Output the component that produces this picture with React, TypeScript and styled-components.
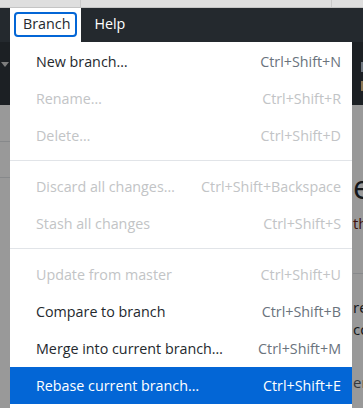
import React from 'react';
import styled, { createGlobalStyle } from 'styled-components';

const GlobalStyle = createGlobalStyle`
  html, body {
    margin: 0;
    padding: 0;
    overflow: hidden;
    background: #ffffff;
  }
  body {
    font-family: "Open Sans", "Noto Sans", "DejaVu Sans", sans-serif;
  }
`;

const Page = styled.div`
  position: relative;
  width: 363px;
  height: 408px;
  overflow: hidden;
  display: flex;
  flex-direction: column;
`;

const TabStrip = styled.div`
  height: 7px;
  flex: none;
  background: #dedede;
  border-bottom: 1px solid #c4c4c4;
  display: flex;
`;

const TabCell = styled.div<{ $width: number }>`
  width: ${p => p.$width}px;
  flex: none;
  border-right: 1px solid #c9c9c9;
`;

const MenuBar = styled.div`
  height: 34px;
  flex: none;
  background: #24292e;
  display: flex;
  padding-left: 10px;
`;

const Trigger = styled.div<{ $open?: boolean }>`
  display: flex;
  align-items: center;
  padding: 4px 4px 5px;
  background: ${p => (p.$open ? '#ffffff' : 'transparent')};
  color: ${p => (p.$open ? '#24292e' : '#ffffff')};
  font-size: 14.3px;
  align-self: stretch;
`;

const TriggerLabel = styled.span<{ $focused?: boolean }>`
  display: flex;
  align-items: center;
  height: 21px;
  padding: 0 5px 0 7px;
  border: 2px solid ${p => (p.$focused ? '#0366d6' : 'transparent')};
  border-radius: 4px;
  line-height: 1;
`;

const Workspace = styled.div`
  flex: 1;
  display: flex;
  flex-direction: column;
  background: #ffffff;
`;

const Toolbar = styled.div`
  height: 63px;
  flex: none;
  background: #2f363d;
  display: flex;
  justify-content: space-between;
  padding: 20px 0 0 1px;
  box-sizing: border-box;
`;

const Caret = styled.span`
  width: 0;
  height: 0;
  border-left: 4px solid transparent;
  border-right: 4px solid transparent;
  border-top: 5px solid #d0d0d0;
`;

const ChipColumn = styled.div`
  display: flex;
  flex-direction: column;
  gap: 9px;
  padding-top: 0;
  width: 2px;
`;

const Chip = styled.span<{ $tone: string }>`
  display: block;
  width: 2px;
  height: 10px;
  background: ${p => p.$tone};
`;

const Body = styled.div`
  flex: 1;
  display: flex;
`;

const Sidebar = styled.div`
  width: 10px;
  flex: none;
  display: flex;
  flex-direction: column;
`;

const SidebarRow = styled.div<{ $h: number }>`
  height: ${p => p.$h}px;
  flex: none;
  box-sizing: border-box;
  border-bottom: 1px solid #e1e4e8;
`;

const Main = styled.div`
  flex: 1;
  display: flex;
  flex-direction: column;
  padding-left: 343px;
  color: #24292e;
  white-space: nowrap;
`;

const Heading = styled.div`
  margin-top: 62px;
  font-size: 32px;
  line-height: 40px;
`;

const Lead = styled.div`
  font-size: 15px;
  color: #6b1d12;
  line-height: 20px;
  margin-top: 6px;
`;

const Panel = styled.div`
  margin-top: 40px;
  border-top: 1px solid #e1e4e8;
  padding-top: 22px;
  font-size: 15px;
  line-height: 22px;
`;

const Foot = styled.div`
  margin-top: 32px;
  font-size: 15px;
  color: #586069;
`;

const Dimmer = styled.div`
  position: absolute;
  left: 0;
  right: 0;
  top: 42px;
  bottom: 0;
  background: rgba(0, 0, 0, 0.4);
`;

const Dropdown = styled.div`
  position: absolute;
  left: 10px;
  top: 42px;
  width: 342px;
  background: #ffffff;
  padding: 1px 0 4px;
  display: flex;
  flex-direction: column;
  font-size: 14.3px;
`;

const Item = styled.div<{ $disabled?: boolean; $active?: boolean }>`
  height: 37px;
  display: flex;
  align-items: center;
  justify-content: space-between;
  padding: 0 11px 0 26px;
  background: ${p => (p.$active ? '#0366d6' : 'transparent')};
  color: ${p => (p.$active ? '#ffffff' : p.$disabled ? '#c2c4c6' : '#24292e')};
`;

const Shortcut = styled.span<{ $disabled?: boolean; $active?: boolean }>`
  color: ${p => (p.$active ? '#ffffff' : p.$disabled ? '#c2c4c6' : '#6a737d')};
`;

const Separator = styled.div`
  height: 1px;
  background: #e1e4e8;
  margin: 6px 0 7px;
`;

type Entry =
  | { kind: 'item'; label: string; keys: string; disabled?: boolean; active?: boolean }
  | { kind: 'sep' };

const entries: Entry[] = [
  { kind: 'item', label: 'New branch…', keys: 'Ctrl+Shift+N' },
  { kind: 'item', label: 'Rename…', keys: 'Ctrl+Shift+R', disabled: true },
  { kind: 'item', label: 'Delete…', keys: 'Ctrl+Shift+D', disabled: true },
  { kind: 'sep' },
  { kind: 'item', label: 'Discard all changes…', keys: 'Ctrl+Shift+Backspace', disabled: true },
  { kind: 'item', label: 'Stash all changes', keys: 'Ctrl+Shift+S', disabled: true },
  { kind: 'sep' },
  { kind: 'item', label: 'Update from master', keys: 'Ctrl+Shift+U', disabled: true },
  { kind: 'item', label: 'Compare to branch', keys: 'Ctrl+Shift+B' },
  { kind: 'item', label: 'Merge into current branch…', keys: 'Ctrl+Shift+M' },
  { kind: 'item', label: 'Rebase current branch…', keys: 'Ctrl+Shift+E', active: true },
];

export default function App() {
  return (
    <Page>
      <GlobalStyle />
      <TabStrip>
        <TabCell $width={80} />
        <TabCell $width={250} />
      </TabStrip>
      <MenuBar>
        <Trigger $open>
          <TriggerLabel $focused>Branch</TriggerLabel>
        </Trigger>
        <Trigger>
          <TriggerLabel>Help</TriggerLabel>
        </Trigger>
      </MenuBar>
      <Workspace>
        <Toolbar>
          <Caret />
          <ChipColumn>
            <Chip $tone="#b9c7d6" />
            <Chip $tone="#e8c98f" />
          </ChipColumn>
        </Toolbar>
        <Body>
          <Sidebar>
            <SidebarRow $h={37} />
            <SidebarRow $h={36} />
          </Sidebar>
          <Main>
            <Heading>e</Heading>
            <Lead>th</Lead>
            <Panel>
              <div>re</div>
              <div>co</div>
            </Panel>
            <Foot>er</Foot>
          </Main>
        </Body>
      </Workspace>
      <Dimmer />
      <Dropdown>
        {entries.map((e, i) =>
          e.kind === 'sep' ? (
            <Separator key={i} />
          ) : (
            <Item key={i} $disabled={e.disabled} $active={e.active}>
              <span>{e.label}</span>
              <Shortcut $disabled={e.disabled} $active={e.active}>
                {e.keys}
              </Shortcut>
            </Item>
          )
        )}
      </Dropdown>
    </Page>
  );
}
